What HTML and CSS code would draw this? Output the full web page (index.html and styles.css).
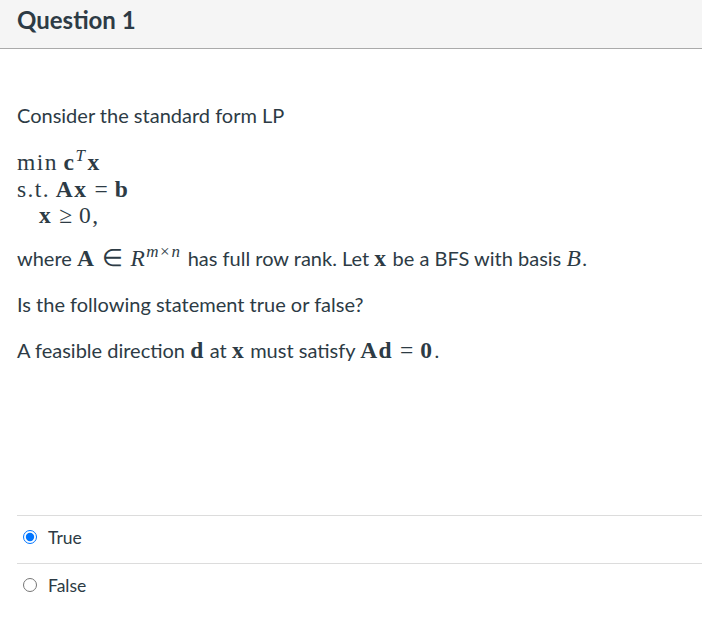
FILE: index.html
```html
<!DOCTYPE html>
<html>
<head>
<meta charset="utf-8">
<link rel="stylesheet" href="styles.css">
</head>
<body>
<div class="question">
  <div class="header"><h2 class="title">Question 1</h2></div>
  <div class="body">
    <p class="para first">Consider the standard form LP</p>
    <div class="math-block">
      <div class="mline"><span class="m">min</span> <span class="mb">c</span><sup class="mi">T</sup><span class="mb">x</span></div>
      <div class="mline"><span class="m">s.t.</span> <span class="mb">Ax</span><span class="rel">=</span><span class="mb">b</span></div>
      <div class="mline indent"><span class="mb">x</span><span class="rel">≥</span><span class="m">0,</span></div>
    </div>
    <p class="para">where <span class="mb">A</span><span class="rel">∈</span><span class="mi">R</span><sup class="mi sup">m<span class="times">×</span>n</sup> has full row rank. Let <span class="mb">x</span> be a BFS with basis <span class="mi">B</span>.</p>
    <p class="para">Is the following statement true or false?</p>
    <p class="para">A feasible direction <span class="mb">d</span> at <span class="mb">x</span> must satisfy <span class="mb">Ad</span><span class="rel">=</span><span class="mb zero">0</span>.</p>
  </div>
  <div class="answers">
    <label class="answer"><input type="radio" name="a" checked><span>True</span></label>
    <label class="answer"><input type="radio" name="a"><span>False</span></label>
  </div>
</div>
</body>
</html>
```
FILE: styles.css
```css
html, body { margin: 0; padding: 0; background: #fff; }
body { font-family: Lato, "Noto Sans", sans-serif; color: #2d3b45; font-size: 20px; }
.header {
  background: #f5f5f5;
  border-bottom: 1px solid #aaaaaa;
  height: 49px;
  box-sizing: border-box;
  padding: 0 17px;
  display: flex;
  align-items: center;
}
.title { margin: 0; font-size: 24px; font-weight: 700; line-height: 1; padding-bottom: 9px; }
.body { padding: 0 17px; }
.para { margin: 0; line-height: 24px; }
.first { margin-top: 54px; }
.math-block { margin-top: 22px; font-family: "Liberation Serif", serif; font-size: 23px; }
.mline { line-height: 26.5px; height: 26.5px; }
.indent { padding-left: 22px; }
.m, .mb, .mi, .rel { font-family: "Liberation Serif", serif; font-size: 23.5px; letter-spacing: 0.06em; }
.mb { font-weight: 700; }
.mi { font-style: italic; }
.rel { margin: 0 7px 0 7px; letter-spacing: 0; }
.zero { letter-spacing: 0.1em; }
sup.mi { font-size: 17px; vertical-align: 9px; line-height: 0; letter-spacing: 0.04em; margin-right: 2px; }
.times { font-style: normal; margin: 0 1px; }
.body .para + .para { margin-top: 22px; }
.math-block + .para { margin-top: 17px; }
.answers { margin-top: 153px; margin-left: 17px; }
.answer {
  display: flex;
  align-items: center;
  height: 43px;
  padding-bottom: 4px;
  border-top: 1px solid #dcdcdc;
  font-size: 17.5px;
}
.answer input { margin: 0 11px 0 6px; width: 14px; height: 14px; accent-color: #0075ff; }
```
